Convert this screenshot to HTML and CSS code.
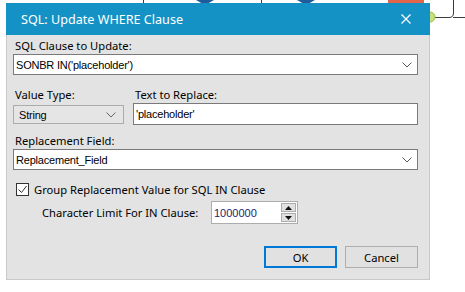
FILE: index.html
```html
<!DOCTYPE html>
<html lang="en">
<head>
    <meta charset="UTF-8">
    <meta name="viewport" content="width=device-width, initial-scale=1.0">
    <title>SQL: Update WHERE Clause</title>
    <link rel="stylesheet" href="styles.css">
</head>
<body>
    <!-- workflow canvas peeking out behind the dialog -->
    <svg class="canvas" width="465" height="40" viewBox="0 0 465 40">
        <line x1="143.5" y1="0" x2="143.5" y2="5" stroke="#3a3a3a"/>
        <line x1="261.5" y1="0" x2="261.5" y2="5" stroke="#3a3a3a"/>
        <path d="M196 0 L214 0 L207 4 L203 4 Z" fill="#1f5c9c"/>
        <path d="M297 0 L315 0 L308 4 L304 4 Z" fill="#1f5c9c"/>
        <rect x="388" y="0" width="36" height="4" fill="#e0654b"/>
        <path d="M453.5 0 V13 Q453.5 17.5 449 17.5 H432" fill="none" stroke="#3a3a3a"/>
        <line x1="453" y1="17.5" x2="465" y2="17.5" stroke="#3a3a3a"/>
        <circle cx="430" cy="17" r="5" fill="#c5e07e" stroke="#9cbf4a"/>
    </svg>

    <div class="dialog">
        <div class="titlebar">
            <span class="title">SQL: Update WHERE Clause</span>
            <svg class="close" width="10" height="10" viewBox="0 0 10 10">
                <path d="M0.5 0.5 L9.5 9.5 M9.5 0.5 L0.5 9.5" stroke="#fff" stroke-width="1.3"/>
            </svg>
        </div>

        <div class="content">
            <label class="lbl">SQL Clause to Update:</label>
            <div class="combo">
                <span>SONBR IN('placeholder')</span>
                <svg class="chev" width="10" height="6" viewBox="0 0 10 6"><path d="M0.5 0.5 L5 5 L9.5 0.5" fill="none" stroke="#555"/></svg>
            </div>

            <div class="row">
                <div class="col-type">
                    <label class="lbl">Value Type:</label>
                    <div class="dropdown">
                        <span>String</span>
                        <svg class="chev" width="10" height="6" viewBox="0 0 10 6"><path d="M0.5 0.5 L5 5 L9.5 0.5" fill="none" stroke="#666"/></svg>
                    </div>
                </div>
                <div class="col-text">
                    <label class="lbl">Text to Replace:</label>
                    <div class="textbox">'placeholder'</div>
                </div>
            </div>

            <label class="lbl lbl-field">Replacement Field:</label>
            <div class="combo">
                <span>Replacement_Field</span>
                <svg class="chev" width="10" height="6" viewBox="0 0 10 6"><path d="M0.5 0.5 L5 5 L9.5 0.5" fill="none" stroke="#555"/></svg>
            </div>

            <div class="check-row">
                <span class="checkbox">
                    <svg width="11" height="11" viewBox="0 0 11 11"><path d="M1.5 5.5 L4.5 8.5 L9.5 2" fill="none" stroke="#333"/></svg>
                </span>
                <span>Group Replacement Value for SQL IN Clause</span>
            </div>

            <div class="limit-row">
                <span>Character Limit For IN Clause:</span>
                <div class="number">
                    <span class="value">1000000</span>
                    <div class="spin">
                        <span class="spin-btn"><svg width="7" height="4" viewBox="0 0 7 4"><path d="M0 4 L3.5 0 L7 4 Z" fill="#111"/></svg></span>
                        <span class="spin-btn"><svg width="7" height="4" viewBox="0 0 7 4"><path d="M0 0 L3.5 4 L7 0 Z" fill="#111"/></svg></span>
                    </div>
                </div>
            </div>

            <div class="buttons">
                <button class="btn btn-ok">OK</button>
                <button class="btn">Cancel</button>
            </div>
        </div>
    </div>
</body>
</html>
```

FILE: styles.css
```css
body {
    margin: 0;
    background: #fff;
    font-family: "Noto Sans", "Liberation Sans", sans-serif;
    font-size: 11.2px;
    color: #000;
    position: relative;
    width: 465px;
    height: 292px;
    overflow: hidden;
}
.canvas {
    position: absolute;
    left: 0;
    top: 0;
}
.dialog {
    position: relative;
    margin: 3px 0 0 6px;
    width: 424px;
}
.titlebar {
    height: 32px;
    background: #1592c5;
    display: flex;
    align-items: center;
    justify-content: space-between;
    padding: 0 19px 0 15px;
    box-sizing: border-box;
}
.title {
    color: #fff;
    font-size: 12.6px;
}
.content {
    background: #e3e3e3;
    border: 1px solid #c9c9c9;
    border-top: none;
    height: 245px;
    padding: 3px 11px 0 6px;
    box-sizing: border-box;
}
.lbl {
    display: block;
    line-height: 16px;
    padding-left: 2px;
}
.combo {
    height: 21px;
    background: #fff;
    border: 1px solid #7a7a7a;
    box-sizing: border-box;
    display: flex;
    align-items: center;
    justify-content: space-between;
    padding: 0 5px 0 2px;
    font-family: "Liberation Sans", sans-serif;
    font-size: 11px;
    letter-spacing: -0.2px;
}
.row {
    display: flex;
    gap: 9px;
    margin-top: 12px;
}
.col-type {
    width: 111px;
}
.col-text {
    flex: 1;
}
.dropdown {
    margin-top: 2px;
    height: 19px;
    background: #e5e5e5;
    border: 1px solid #acacac;
    box-sizing: border-box;
    display: flex;
    align-items: center;
    justify-content: space-between;
    padding: 0 7px 0 5px;
    font-family: "Liberation Sans", sans-serif;
    font-size: 11px;
    letter-spacing: -0.2px;
}
.textbox {
    height: 22px;
    background: #fff;
    border: 1px solid #7a7a7a;
    box-sizing: border-box;
    display: flex;
    align-items: center;
    padding-left: 2px;
    font-family: "Liberation Sans", sans-serif;
    font-size: 11px;
    letter-spacing: -0.2px;
}
.lbl-field {
    margin-top: 8px;
}
.check-row {
    display: flex;
    align-items: center;
    gap: 5px;
    margin-top: 12px;
    padding-left: 3px;
}
.checkbox {
    width: 13px;
    height: 13px;
    border: 1px solid #333;
    box-sizing: border-box;
    background: #fff;
    display: flex;
    align-items: center;
    justify-content: center;
}
.limit-row {
    display: flex;
    align-items: center;
    margin-top: 4px;
    padding-left: 29px;
}
.limit-row > span {
    width: 169px;
}
.number {
    width: 87px;
    height: 23px;
    background: #fff;
    border: 1px solid #adadad;
    box-sizing: border-box;
    display: flex;
    align-items: center;
    justify-content: space-between;
    padding: 0 1px 0 2px;
}
.number .value {
    color: #1d2470;
    font-family: "Liberation Sans", sans-serif;
    font-size: 11px;
}
.spin {
    display: flex;
    flex-direction: column;
    gap: 1px;
}
.spin-btn {
    width: 15px;
    height: 9px;
    background: #e1e1e1;
    border: 1px solid #adadad;
    box-sizing: border-box;
    display: flex;
    align-items: center;
    justify-content: center;
}
.buttons {
    display: flex;
    justify-content: flex-end;
    gap: 8px;
    margin-top: 22px;
}
.btn {
    width: 73px;
    height: 22px;
    background: #e1e1e1;
    border: 1px solid #adadad;
    font-family: "Noto Sans", sans-serif;
    font-size: 11.2px;
    padding: 0;
    color: #000;
}
.btn-ok {
    border: 2px solid #0078d7;
}
```
